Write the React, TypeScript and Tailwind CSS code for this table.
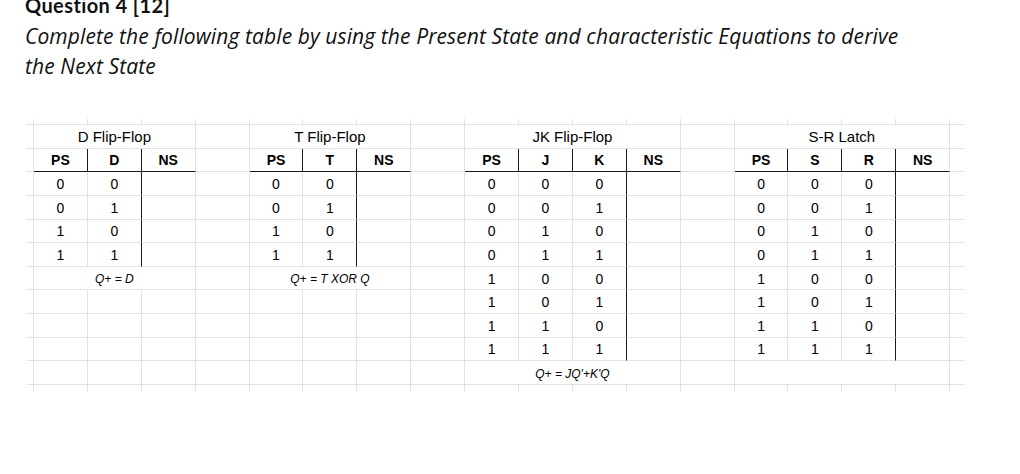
type Cell = {
  t?: string;
  span?: 1 | 3 | 4;
  kind?: 'title' | 'head' | 'data' | 'eq';
  r?: 'k';
  b?: 'k';
};

const kindClass = {
  title: 'text-[15px] pt-[2px]',
  head: 'text-[14px] font-bold pt-[2px]',
  data: 'text-[14px] pt-[2px]',
  eq: 'text-[12px] italic pt-[2px]',
};

const empty = (n: number): Cell[] => Array.from({ length: n }, () => ({}));

const twoBit = [
  ['0', '0'],
  ['0', '1'],
  ['1', '0'],
  ['1', '1'],
];

const threeBit = [
  ['0', '0', '0'],
  ['0', '0', '1'],
  ['0', '1', '0'],
  ['0', '1', '1'],
  ['1', '0', '0'],
  ['1', '0', '1'],
  ['1', '1', '0'],
  ['1', '1', '1'],
];

function buildRows(): Cell[][] {
  const rows: Cell[][] = [];

  rows.push([
    { t: 'D Flip-Flop', span: 3, kind: 'title' },
    {},
    { t: 'T Flip-Flop', span: 3, kind: 'title' },
    {},
    { t: 'JK Flip-Flop', span: 4, kind: 'title' },
    {},
    { t: 'S-R Latch', span: 4, kind: 'title' },
  ]);

  const h = (t: string, black = true): Cell => ({ t, kind: 'head', b: 'k', r: black ? 'k' : undefined });
  rows.push([
    h('PS'), h('D'), h('NS', false),
    {},
    h('PS'), h('T'), h('NS', false),
    {},
    h('PS'), h('J'), h('K'), h('NS', false),
    {},
    h('PS'), h('S'), h('R'), h('NS', false),
  ]);

  threeBit.forEach(([a, b, c], i) => {
    let left: Cell[];
    if (i < 4) {
      const [ps, x] = twoBit[i];
      const tbl: Cell[] = [{ t: ps }, { t: x, r: 'k' }, {}];
      left = [...tbl, {}, ...tbl.map((c) => ({ ...c })), {}];
    } else if (i === 4) {
      left = [
        { t: 'Q+ = D', span: 3, kind: 'eq' },
        {},
        { t: 'Q+ = T XOR Q', span: 3, kind: 'eq' },
        {},
      ];
    } else {
      left = empty(8);
    }
    const tbl: Cell[] = [{ t: a }, { t: b }, { t: c, r: 'k' }, {}];
    rows.push([...left, ...tbl, {}, ...tbl.map((c) => ({ ...c }))]);
  });

  rows.push([...empty(8), { t: "Q+ = JQ'+K'Q", span: 4, kind: 'eq' }, {}, { span: 4 }]);
  return rows;
}

function cellClass(c: Cell) {
  return [
    'flex items-center justify-center whitespace-nowrap text-black',
    c.span === 3 ? 'col-span-3' : c.span === 4 ? 'col-span-4' : '',
    c.r === 'k' ? 'border-r border-r-[#1a1a1a]' : 'border-r border-r-[#e2e2e2]',
    c.b === 'k' ? 'border-b border-b-[#1a1a1a]' : 'border-b border-b-[#e2e2e2]',
    kindClass[c.kind ?? 'data'],
  ].join(' ');
}

function Sheet() {
  const rows = buildRows();
  return (
    <div className="ml-[27px] mt-[38px] grid w-[937px] grid-cols-[7px_repeat(17,53.9px)_14px] grid-rows-[6px_repeat(11,23.64px)_7px] font-['Liberation_Sans',Arial,sans-serif]">
      {/* top stub */}
      {Array.from({ length: 18 }, (_, i) => (
        <div key={'t' + i} className="border-r border-b border-[#e2e2e2]" />
      ))}
      <div className="border-b border-[#e2e2e2]" />

      {rows.map((row, ri) => (
        <div key={ri} className="contents">
          <div className="border-r border-b border-[#e2e2e2]" />
          {row.map((c, ci) => (
            <div key={ci} className={cellClass(c)}>
              {c.t}
            </div>
          ))}
          <div className="border-b border-[#e2e2e2]" />
        </div>
      ))}

      {/* bottom stub */}
      {Array.from({ length: 18 }, (_, i) => (
        <div key={'b' + i} className="border-r border-[#e2e2e2]" />
      ))}
      <div />
    </div>
  );
}

export default function App() {
  return (
    <div className="h-[474px] w-[1020px] overflow-hidden bg-white">
      <div className="-mt-[10px] pl-[25px] leading-[30px] text-[#111]">
        <h2 className="font-['Lato',sans-serif] text-[20px] font-bold tracking-[0.4px]">Question 4 [12]</h2>
        <p className="mt-[1px] font-['Open_Sans',sans-serif] text-[21px] italic tracking-[0.1px]">
          Complete the following table by using the Present State and characteristic Equations to derive
          <br />
          the Next State
        </p>
      </div>
      <Sheet />
    </div>
  );
}
